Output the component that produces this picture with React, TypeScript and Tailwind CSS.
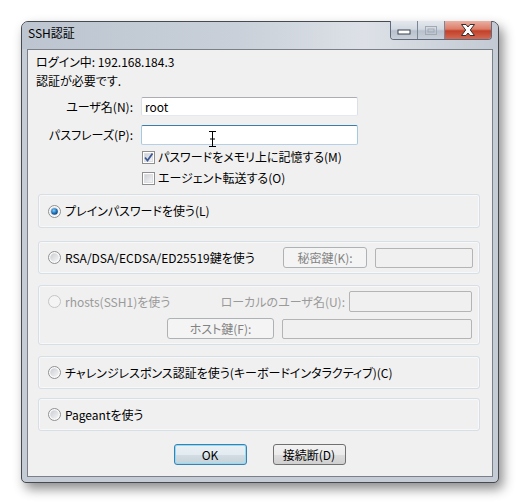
import React from 'react';

const font = "font-['Noto_Sans_CJK_JP','Noto_Sans_CJK_SC',sans-serif] [font-feature-settings:'palt']";

const Radio: React.FC<{ checked?: boolean; disabled?: boolean }> = ({ checked, disabled }) => (
    <svg width="13" height="13" viewBox="0 0 13 13" className="shrink-0">
        <defs>
            <linearGradient id="rbg" x1="0" y1="0" x2="1" y2="1">
                <stop offset="0" stopColor="#c9ccd1" />
                <stop offset="1" stopColor="#f7f7f7" />
            </linearGradient>
            <radialGradient id="rdot" cx="0.4" cy="0.35" r="0.7">
                <stop offset="0" stopColor="#7fd0ff" />
                <stop offset="0.6" stopColor="#1d6fb8" />
                <stop offset="1" stopColor="#0e3d75" />
            </radialGradient>
        </defs>
        <circle cx="6.5" cy="6.5" r="6" fill={disabled ? '#f4f4f4' : '#fbfbfb'} stroke={disabled ? '#c4c4c4' : '#8e8f8f'} />
        {!disabled && <circle cx="6.5" cy="6.5" r="4.3" fill="url(#rbg)" />}
        {checked && <circle cx="6.5" cy="6.5" r="3.3" fill="url(#rdot)" />}
    </svg>
);

const Check: React.FC<{ checked?: boolean }> = ({ checked }) => (
    <svg width="13" height="13" viewBox="0 0 13 13" className="shrink-0">
        <defs>
            <linearGradient id="cbg" x1="0" y1="0" x2="1" y2="1">
                <stop offset="0" stopColor="#cbcfd5" />
                <stop offset="1" stopColor="#f6f6f6" />
            </linearGradient>
        </defs>
        <rect x="0.5" y="0.5" width="12" height="12" fill="#fff" stroke="#8e8f8f" />
        <rect x="2.5" y="2.5" width="8" height="8" fill="url(#cbg)" stroke="#dedfe2" />
        {checked && <path d="M3 6.5 L5.5 9.5 L10.5 2.5" fill="none" stroke="#3e5a94" strokeWidth="1.8" />}
    </svg>
);

const TextBox: React.FC<{ w: string; h: string; value?: string; focused?: boolean; disabled?: boolean }> = ({ w, h, value, focused, disabled }) => {
    let cls = 'border-[#abadb3] border-l-[#dbdfe6] border-r-[#dbdfe6] border-b-[#e3e9ef] bg-white';
    if (focused) cls = 'border-[#3d7bad] border-l-[#a4c9e3] border-r-[#a4c9e3] border-b-[#b5cfe7] bg-white';
    if (disabled) cls = 'border-[#b4b4b4] bg-[#f0f0f0]';
    return (
        <div className={`${w} ${h} border rounded-[2px] ${cls} flex items-center pl-[3px] text-[12px] text-black shrink-0`}>
            {value}
        </div>
    );
};

const Btn: React.FC<{ w: string; children: React.ReactNode; disabled?: boolean; focused?: boolean }> = ({ w, children, disabled, focused }) => {
    let cls = 'border-[#707070] bg-[linear-gradient(#f2f2f2_0%,#ebebeb_50%,#dddddd_51%,#cfcfcf_100%)] text-black';
    if (disabled) cls = 'border-[#adb2b5] bg-[#f4f4f4] text-[#838383]';
    if (focused) cls = 'border-[#3c7fb1] bg-[linear-gradient(#eaf1f5_0%,#e2ebf0_50%,#d3dde3_51%,#c6d1d8_100%)] text-black shadow-[inset_0_0_0_1px_#8fdcf7]';
    return (
        <div className={`${w} h-[21px] border rounded-[3px] ${cls} flex items-center justify-center text-[12px] shrink-0`}>
            {children}
        </div>
    );
};

const Group: React.FC<{ h: string; mt: string; children: React.ReactNode; col?: boolean }> = ({ h, mt, children, col }) => (
    <div className={`${mt} ml-[10px] w-[442px] ${h} border border-[#d5dfe5] rounded-[3px] shadow-[inset_0_0_0_1px_#ffffff80] flex ${col ? 'flex-col' : 'items-center'} pl-[9px] pr-[6px]`}>
        {children}
    </div>
);

const CaptionButtons = () => (
    <div className="flex -mt-px mr-[6px] h-[19px] border border-t-0 border-[#5f6b7c] rounded-b-[4px] overflow-hidden">
        <div className="w-[27px] h-full border-r border-[#7a8696] bg-[linear-gradient(#e4e8ee_0%,#d3d9e1_45%,#b8c1cd_55%,#c9d0d9_100%)] flex items-center justify-center pt-[3px]">
            <svg width="14" height="6" viewBox="0 0 14 6">
                <rect x="1" y="1" width="12" height="4" fill="#fff" stroke="#3b4350" />
            </svg>
        </div>
        <div className="w-[27px] h-full border-r border-[#7a8696] bg-[linear-gradient(#e4e8ee_0%,#d3d9e1_45%,#b8c1cd_55%,#c9d0d9_100%)] flex items-center justify-center">
            <svg width="12" height="9" viewBox="0 0 12 9">
                <rect x="0.5" y="0.5" width="11" height="8" fill="none" stroke="#a2a9b3" />
                <rect x="3" y="3" width="6" height="3" fill="none" stroke="#a2a9b3" />
            </svg>
        </div>
        <div className="w-[46px] h-full bg-[linear-gradient(#eab0a3_0%,#dc7d68_45%,#c2402a_55%,#d36a55_100%)] flex items-center justify-center">
            <svg width="16" height="12" viewBox="0 0 16 12">
                <path d="M1.5 0.5 H6 L8 3 L10 0.5 H14.5 L10.3 6 L14.5 11.5 H10 L8 9 L6 11.5 H1.5 L5.7 6 Z" fill="#fff" stroke="#3a2a28" strokeWidth="1" />
            </svg>
        </div>
    </div>
);

export default function App() {
    return (
        <div className={`w-[520px] h-[504px] bg-white pt-[21px] pl-[21px] ${font}`}>
            <div className="w-[478px] h-[462px] rounded-t-[7px] rounded-b-[5px] border border-[#464b52] bg-[#c5ccd5] shadow-[4px_6px_12px_rgba(0,0,0,0.45)] flex flex-col">
                {/* title bar */}
                <div className="h-[27px] shrink-0 flex items-start rounded-t-[6px] bg-[linear-gradient(90deg,#bcc5d0_0%,#c9d0d9_45%,#dde1e7_72%,#c3cad3_100%)]">
                    <div className="pl-[6px] pt-[4px] text-[12px] leading-[14px] text-black">SSH認証</div>
                    <div className="ml-auto">
                        <CaptionButtons />
                    </div>
                </div>

                {/* client area */}
                <div className="mx-[5px] mb-[5px] flex-1 border border-[#7b8088] bg-[#f0f0f0] text-[12px] leading-[14px] text-black flex flex-col">
                    <div className="mt-[5px] pl-[8px] h-[14px]">ログイン中: 192.168.184.3</div>
                    <div className="mt-[5px] pl-[8px] h-[14px]">認証が必要です.</div>

                    <div className="mt-[9px] flex items-center">
                        <div className="w-[105px] text-right">ユーザ名(N):</div>
                        <div className="ml-[8px]">
                            <TextBox w="w-[217px]" h="h-[19px]" value="root" />
                        </div>
                    </div>
                    <div className="mt-[9px] flex items-center">
                        <div className="w-[105px] text-right">パスフレーズ(P):</div>
                        <div className="ml-[8px] relative">
                            <TextBox w="w-[217px]" h="h-[20px]" focused />
                            <svg width="7" height="16" viewBox="0 0 7 16" className="absolute left-[68px] top-[6px]">
                                <path d="M0 0.5 H7 M3.5 0.5 V15.5 M0 15.5 H7 M1 8 H6" stroke="#000" strokeWidth="1" />
                            </svg>
                        </div>
                    </div>

                    <div className="mt-[4px] ml-[114px] h-[16px] flex items-center gap-[3px]">
                        <Check checked />
                        <span>パスワードをメモリ上に記憶する(M)</span>
                    </div>
                    <div className="mt-[5px] ml-[114px] h-[16px] flex items-center gap-[3px]">
                        <Check />
                        <span>エージェント転送する(O)</span>
                    </div>

                    <Group mt="mt-[8px]" h="h-[34px]">
                        <Radio checked />
                        <span className="ml-[4px]">プレインパスワードを使う(L)</span>
                    </Group>

                    <Group mt="mt-[13px]" h="h-[33px]">
                        <Radio />
                        <span className="ml-[4px]">RSA/DSA/ECDSA/ED25519鍵を使う</span>
                        <div className="ml-auto">
                            <Btn w="w-[84px]" disabled>秘密鍵(K):</Btn>
                        </div>
                        <div className="ml-[8px]">
                            <TextBox w="w-[98px]" h="h-[20px]" disabled />
                        </div>
                    </Group>

                    <Group mt="mt-[11px]" h="h-[60px]" col>
                        <div className="mt-[5px] flex items-center text-[#9a9a9a]">
                            <Radio disabled />
                            <span className="ml-[4px]">rhosts(SSH1)を使う</span>
                            <span className="ml-auto mr-[4px]">ローカルのユーザ名(U):</span>
                            <div className="mr-px">
                                <TextBox w="w-[123px]" h="h-[21px]" disabled />
                            </div>
                        </div>
                        <div className="mt-[6px] flex items-center justify-end pr-px">
                            <Btn w="w-[107px]" disabled>ホスト鍵(F):</Btn>
                            <div className="ml-[8px]">
                                <TextBox w="w-[190px]" h="h-[20px]" disabled />
                            </div>
                        </div>
                    </Group>

                    <Group mt="mt-[11px]" h="h-[33px]">
                        <Radio />
                        <span className="ml-[4px]">チャレンジレスポンス認証を使う(キーボードインタラクティブ)(C)</span>
                    </Group>

                    <Group mt="mt-[9px]" h="h-[33px]">
                        <Radio />
                        <span className="ml-[4px]">Pageantを使う</span>
                    </Group>

                    <div className="mt-[13px] flex justify-center gap-[26px] pr-px">
                        <Btn w="w-[73px]" focused>OK</Btn>
                        <Btn w="w-[73px]">接続断(D)</Btn>
                    </div>
                </div>
            </div>
        </div>
    );
}
